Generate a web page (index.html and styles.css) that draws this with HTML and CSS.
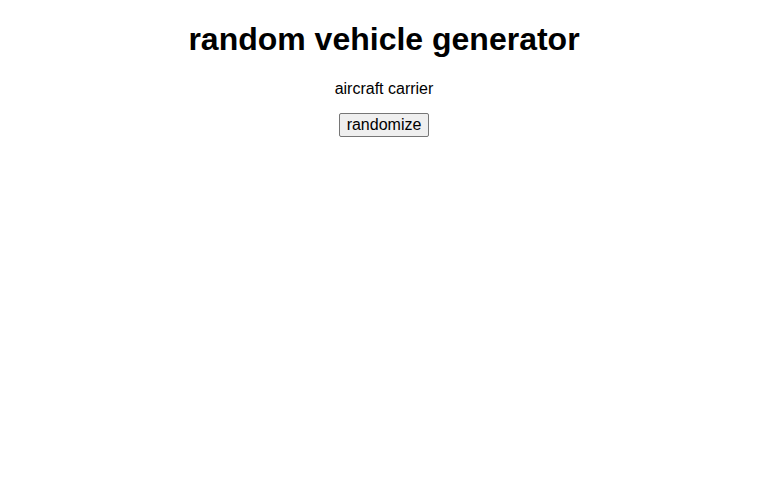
FILE: index.html
```html
<!DOCTYPE html>
<html>
<head>
<meta charset="utf-8">
<title>random vehicle generator</title>
<link rel="stylesheet" href="styles.css">
</head>
<body>
<main class="app">
  <h1 class="title">random vehicle generator</h1>
  <p class="vehicle">aircraft carrier</p>
  <button class="randomize" type="button">randomize</button>
</main>
</body>
</html>
```

FILE: styles.css
```css
body {
  margin: 8px;
  font-family: "Liberation Sans", Arial, sans-serif;
  color: #000;
  background: #fff;
}

.app {
  display: flex;
  flex-direction: column;
  align-items: center;
  text-align: center;
}

.title {
  font-size: 32px;
  font-weight: bold;
  margin: 13px 0 0;
}

.vehicle {
  font-size: 16px;
  margin: 22px 0 0;
}

.randomize {
  font-family: "Liberation Sans", Arial, sans-serif;
  font-size: 16px;
  margin-top: 15px;
  padding: 2px 7px;
  color: #000;
  background: #efefef;
  border: 1px solid #767676;
  border-radius: 2px;
}
```
